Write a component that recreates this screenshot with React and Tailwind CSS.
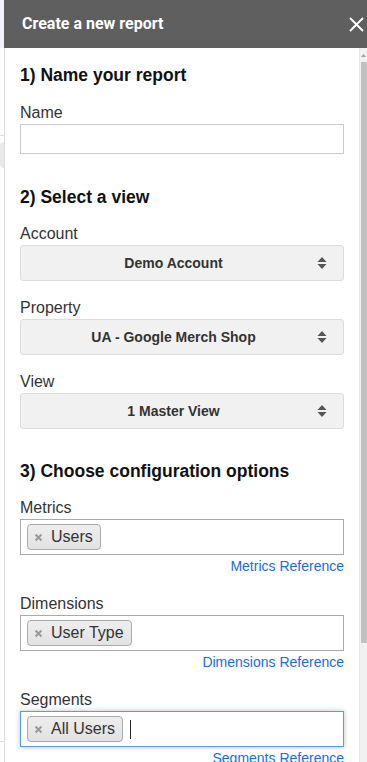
import React from 'react';

const font = { fontFamily: '"Liberation Sans", Arial, sans-serif' };

const SelectArrows = () => (
  <svg width="10" height="13" viewBox="0 0 10 13" className="absolute right-[16px] top-1/2 -translate-y-1/2">
    <path d="M5 0.5 L9.5 5.5 L0.5 5.5 Z" fill="#555" />
    <path d="M5 12.5 L9.5 7.5 L0.5 7.5 Z" fill="#555" />
  </svg>
);

const Heading = ({ children, className = '' }) => (
  <h2 className={`text-[17.5px] leading-[20px] font-bold text-[#111] ${className}`}>{children}</h2>
);

const Label = ({ children, className = '' }) => (
  <div className={`text-[16px] leading-[18px] text-[#333] mb-[2px] ${className}`}>{children}</div>
);

const FakeSelect = ({ value }) => (
  <div className="relative h-[36px] rounded-[3px] border border-[#ddd] bg-[#f1f1f1] flex items-center justify-center pr-[17px]">
    <span className="text-[14px] font-bold text-[#333]">{value}</span>
    <SelectArrows />
  </div>
);

const Chip = ({ label }) => (
  <div className="h-[26px] flex items-center rounded-[4px] border border-[#aaa] bg-gradient-to-b from-[#eee] to-[#e2e2e2] pl-[6px] pr-[7px]">
    <svg width="9" height="9" viewBox="0 0 9 9" className="mr-[8px] mt-[1px]">
      <path d="M1.5 1.5 L7.5 7.5 M7.5 1.5 L1.5 7.5" stroke="#999" strokeWidth="2" />
    </svg>
    <span className="text-[16px] text-[#333] leading-none">{label}</span>
  </div>
);

const MultiBox = ({ label, focused }) => (
  <div
    className={`h-[36px] border flex items-center pl-[6px] gap-[7px] ${
      focused ? 'border-[#5897fb] shadow-[0_0_5px_rgba(0,0,0,0.25)]' : 'border-[#aaa]'
    }`}
  >
    <Chip label={label} />
    {focused && <div className="w-[1px] h-[19px] bg-[#222]" />}
  </div>
);

const RefLink = ({ children }) => (
  <div className="mt-[3px] text-right text-[14px] leading-[16px] text-[#1a6ce0]">{children}</div>
);

export default function App() {
  return (
    <div className="w-[367px] h-[762px] overflow-hidden flex bg-white" style={font}>
      {/* page peeking out on the left */}
      <div className="w-[4px] flex flex-col">
        <div className="h-[48px] bg-[#f2f4f9]" />
        <div className="h-[87px] bg-white" />
        <div className="h-[1px] bg-[#ddd]" />
        <div className="h-[6px]" />
        <div className="h-[26px] bg-[#e9e9e9] rounded-l-[4px]" />
        <div className="flex-1" />
        <div className="h-[1px] bg-[#ddd] mb-[20px]" />
      </div>

      <div className="flex-1 flex flex-col">
        {/* header */}
        <div className="h-[48px] bg-[#5f5f5f] flex items-center justify-between pl-[18px] pr-[2px] shrink-0">
          <span className="text-white text-[16px] font-bold" style={{ fontFamily: 'Roboto, "Liberation Sans", sans-serif' }}>
            Create a new report
          </span>
          <svg width="15" height="15" viewBox="0 0 15 15" className="mr-[1px] mt-[1px]">
            <path d="M1 1 L14 14 M14 1 L1 14" stroke="#fff" strokeWidth="1.8" />
          </svg>
        </div>

        <div className="flex-1 flex border-l border-[#ddd] min-h-0">
          {/* form */}
          <div className="flex-1 pl-[15px] pr-[15px] pt-[17px] border-r border-[#e6e6e6]">
            <Heading>1) Name your report</Heading>
            <Label className="mt-[19px]">Name</Label>
            <div className="h-[30px] border border-[#ccc]" />

            <Heading className="mt-[33px]">2) Select a view</Heading>
            <Label className="mt-[18px]">Account</Label>
            <FakeSelect value="Demo Account" />
            <Label className="mt-[18px]">Property</Label>
            <FakeSelect value="UA - Google Merch Shop" />
            <Label className="mt-[18px]">View</Label>
            <FakeSelect value="1 Master View" />

            <Heading className="mt-[32px]">3) Choose configuration options</Heading>
            <Label className="mt-[18px]">Metrics</Label>
            <MultiBox label="Users" />
            <RefLink>Metrics Reference</RefLink>

            <Label className="mt-[21px]">Dimensions</Label>
            <MultiBox label="User Type" />
            <RefLink>Dimensions Reference</RefLink>

            <Label className="mt-[21px]">Segments</Label>
            <MultiBox label="All Users" focused />
            <RefLink>Segments Reference</RefLink>
          </div>

          {/* scrollbar */}
          <div className="w-[7px] bg-[#f1f1f1] flex flex-col items-center">
            <div className="h-[14px] flex items-center justify-center">
              <svg width="5" height="3" viewBox="0 0 5 3">
                <path d="M2.5 0 L5 3 L0 3 Z" fill="#a3a3a3" />
              </svg>
            </div>
            <div className="w-[6px] h-[581px] bg-[#c1c1c1]" />
          </div>
        </div>
      </div>
    </div>
  );
}
